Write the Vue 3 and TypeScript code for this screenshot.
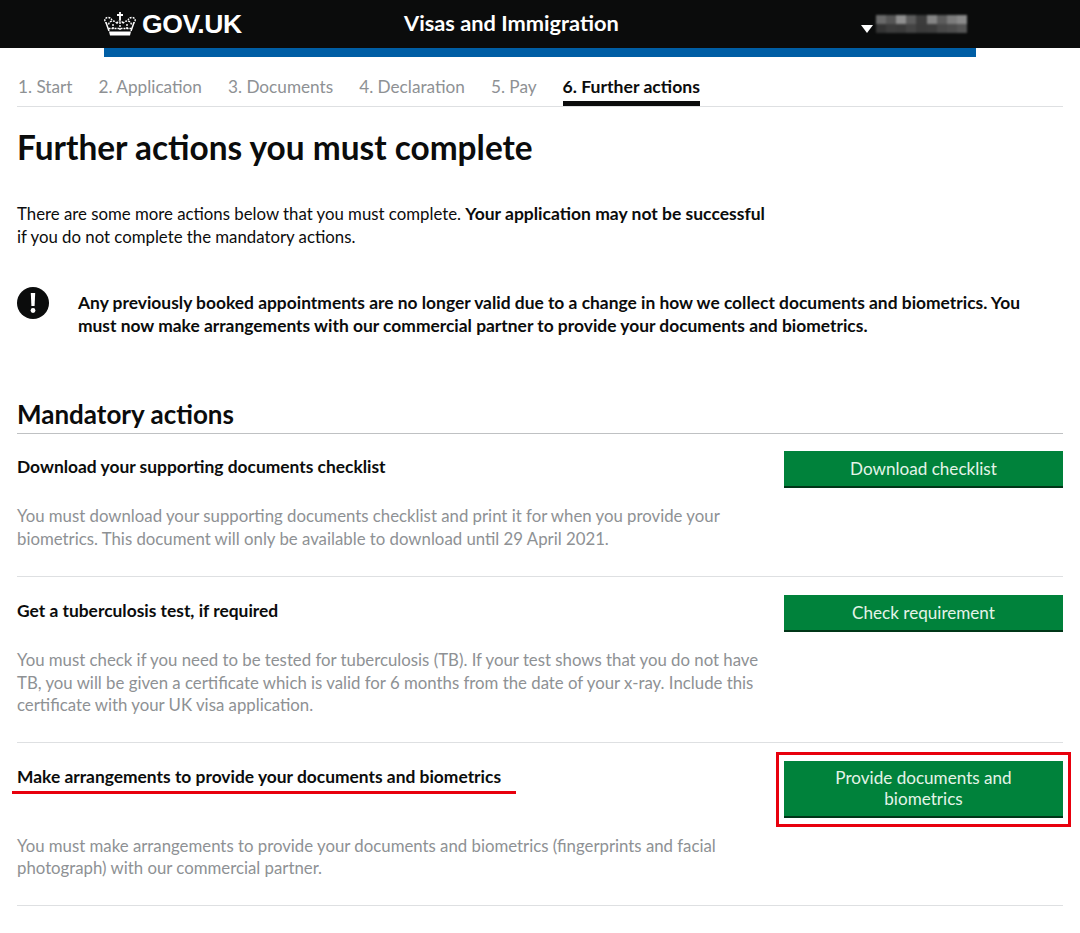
<script setup lang="ts">
interface Action { title: string; lines: string[]; button: string[]; marked?: boolean }
const tabs: string[] = ['1. Start', '2. Application', '3. Documents', '4. Declaration', '5. Pay', '6. Further actions']
const actions: Action[] = [
  { title: 'Download your supporting documents checklist', lines: ['You must download your supporting documents checklist and print it for when you provide your', 'biometrics. This document will only be available to download until 29 April 2021.'], button: ['Download checklist'] },
  { title: 'Get a tuberculosis test, if required', lines: ['You must check if you need to be tested for tuberculosis (TB). If your test shows that you do not have', 'TB, you will be given a certificate which is valid for 6 months from the date of your x-ray. Include this', 'certificate with your UK visa application.'], button: ['Check requirement'] },
  { title: 'Make arrangements to provide your documents and biometrics', lines: ['You must make arrangements to provide your documents and biometrics (fingerprints and facial', 'photograph) with our commercial partner.'], button: ['Provide documents and', 'biometrics'], marked: true },
]
const blur: string[] = ['#6a6a6a','#555','#8f8f8f','#5c5c5c','#3c3c3c','#858585','#5c5c5c','#7c7c7c','#8a8a8a','#333','#3c3c3c','#3a3a3a','#444','#3a3a3a','#3c3c3c','#484848','#4c4c4c','#555']
</script>

<template>
  <div class="page">
    <header class="top">
      <div class="brand">
        <svg class="crown" viewBox="0 0 32 24" width="32" height="24" fill="none" stroke="#fff">
          <path d="M16 0v8M13 3h6" stroke-width="1.800" />
          <path d="M5 19 2 10.500M27 19 30 10.500" stroke-width="1.500" />
          <path d="M4.500 12.500c1-4.500 6.500-4.500 8.500-1M27.500 12.500c-1-4.500-6.500-4.500-8.500-1M13 11.500c1-3.500 5-3.500 6 0" stroke-width="1.400" stroke-dasharray="2 1" />
          <path d="M3 11.500C-.5 9.500.5 5.500 4 5.500c2 0 3 1 4 2.500M29 11.500c3.500-2 2.500-6-1-6-2 0-3 1-4 2.500" stroke-width="1.400" stroke-dasharray="2 1" />
          <path d="M9 12v6M16 10v8M23 12v6" stroke-width="1.400" stroke-dasharray="2 1" />
          <path d="M4.500 16.500h23" stroke-width="1.400" stroke-dasharray="2 1" />
          <path d="M5 19.500h22L26 23.500H6z" fill="#fff" stroke="none" />
        </svg>
        <span class="logo">GOV.UK</span>
      </div>
      <div class="service">Visas and Immigration</div>
      <div class="user">
        <span class="caret"></span>
        <span class="pixels">
          <i v-for="(c, i) in blur" :key="i" :style="{ background: c }"></i>
        </span>
      </div>
    </header>
    <div class="strip"></div>

    <main class="main">
      <nav class="tabs">
        <span v-for="(t, i) in tabs" :key="t" class="tab" :class="{ on: i === tabs.length - 1 }">{{ t }}</span>
      </nav>

      <h1>Further actions you must complete</h1>

      <p class="intro">There are some more actions below that you must complete. <b>Your application may not be successful</b><br />if you do not complete the mandatory actions.</p>

      <div class="notice">
        <svg class="warn" viewBox="0 0 32 32" width="32" height="32">
          <circle cx="16" cy="16" r="16" fill="#0b0c0c" />
          <path d="M13.800 6h4.400l-.6 13h-3.200z" fill="#fff" />
          <circle cx="16" cy="23.500" r="2.400" fill="#fff" />
        </svg>
        <p>Any previously booked appointments are no longer valid due to a change in how we collect documents and biometrics. You<br />must now make arrangements with our commercial partner to provide your documents and biometrics.</p>
      </div>

      <h2>Mandatory actions</h2>

      <section v-for="a in actions" :key="a.title" class="row">
        <div class="head">
          <h3 :class="{ mark: a.marked }">{{ a.title }}</h3>
          <div class="action" :class="{ mark: a.marked }">
            <button type="button" :class="{ tall: a.button.length > 1 }"><template v-for="(l, i) in a.button" :key="i">{{ l }}<br v-if="i < a.button.length - 1" /></template></button>
          </div>
        </div>
        <p class="desc"><template v-for="(l, i) in a.lines" :key="i">{{ l }}<br /></template></p>
      </section>
    </main>
  </div>
</template>

<style>
html, body { margin: 0; background: #fff; }
</style>

<style scoped>
.page { width: 1080px; height: 933px; overflow: hidden; font-family: Lato, "Liberation Sans", sans-serif; color: #0b0c0c; background: #fff; }
.top { height: 48px; background: #0b0c0c; display: flex; align-items: center; color: #fff; padding-left: 104px; box-sizing: border-box; }
.brand { width: 300px; display: flex; align-items: center; gap: 6px; }
.crown { display: block; margin-top: -1px; }
.logo { font: 700 26.500px/46px "Liberation Sans", Arial, sans-serif; letter-spacing: -0.4px; }
.service { width: 457px; font-size: 21.800px; font-weight: 700; line-height: 44px; margin-bottom: 2px; }
.user { display: flex; align-items: center; gap: 3px; }
.caret { width: 0; height: 0; border-left: 6px solid transparent; border-right: 6px solid transparent; border-top: 8px solid #fff; margin-top: 9px; }
.pixels { width: 91px; height: 18px; display: grid; grid-template-columns: repeat(9, 1fr); filter: blur(0.8px); }
.pixels i { display: block; }
.strip { height: 9px; margin: 0 104px; background: #005ea5; }
.main { padding: 0 17px; }
.tabs { display: flex; gap: 26px; height: 49px; padding-left: 1px; border-bottom: 1px solid #dee0e2; box-sizing: content-box; }
.tab { font-size: 17.200px; line-height: 22px; padding-top: 19px; color: #8e9194; box-sizing: border-box; }
.tab.on { color: #0b0c0c; font-size: 17.600px; font-weight: 700; border-bottom: 5px solid #0b0c0c; }
h1 { margin: 21px 0 0; font-size: 33.400px; line-height: 38px; font-weight: 700; }
.intro { margin: 36px 0 0; font-size: 16.800px; line-height: 23px; }
.intro b { font-size: 17.500px; }
.notice { display: flex; margin-top: 43px; gap: 29px; }
.warn { flex: none; margin-top: -4px; }
.notice p { margin: 0; font-size: 17.400px; line-height: 23px; font-weight: 700; }
h2 { margin: 61px 0 0; padding-bottom: 3px; font-size: 26px; line-height: 32px; font-weight: 700; border-bottom: 1px solid #bfc1c3; }
.row { border-bottom: 1px solid #dee0e2; padding: 17px 0 26px; }
.row + .row { padding: 18px 0 25px; }
.head { display: flex; justify-content: space-between; align-items: flex-start; }
.row h3 { margin: 5px 0 0; font-size: 17.400px; line-height: 22px; font-weight: 700; position: relative; }
.desc { margin: 17px 0 0; font-size: 16.800px; line-height: 22.500px; color: #8e9194; }
.action { width: 279px; flex: none; position: relative; }
button { display: block; width: 279px; height: 37px; border: 0; border-bottom: 2px solid #003618; background: #00823b; color: #e4f4e8; font: 400 17.100px/21px Lato, "Liberation Sans", sans-serif; padding: 0; }
button.tall { height: 57px; }
h3.mark::after { content: ""; position: absolute; left: -5px; width: 504px; top: 25px; height: 3px; background: #e8000d; }
.action.mark::after { content: ""; position: absolute; left: -8px; top: -9px; width: 289px; height: 69px; border: 3px solid #e8000d; }
</style>
